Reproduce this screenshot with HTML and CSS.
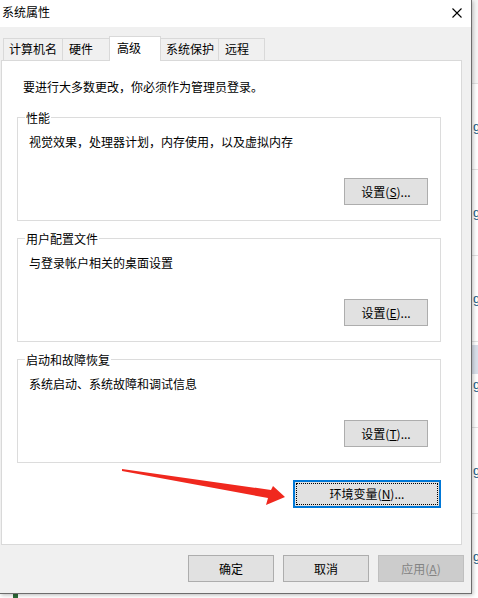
FILE: index.html
```html
<!DOCTYPE html>
<html lang="zh-CN">
<head>
<meta charset="utf-8">
<title>系统属性</title>
<link rel="stylesheet" href="styles.css">
</head>
<body>
<div class="screen">
  <div class="left">
    <div class="window">
      <div class="titlebar">
        <span class="title">系统属性</span>
        <svg class="close" width="10" height="10" viewBox="0 0 10 10"><path d="M0.5 0.5 L9.5 9.5 M9.5 0.5 L0.5 9.5" stroke="#000" stroke-width="1.1" fill="none"/></svg>
      </div>
      <div class="client">
        <div class="tabs">
          <div class="tab t1">计算机名</div>
          <div class="tab t2">硬件</div>
          <div class="tab t3 selected">高级</div>
          <div class="tab t4">系统保护</div>
          <div class="tab t5">远程</div>
        </div>
        <div class="panel">
          <p class="intro">要进行大多数更改，你必须作为管理员登录。</p>
          <div class="group first">
            <span class="legend">性能</span>
            <p class="desc">视觉效果，处理器计划，内存使用，以及虚拟内存</p>
            <button class="btn set">设置(<u>S</u>)...</button>
          </div>
          <div class="group">
            <span class="legend">用户配置文件</span>
            <p class="desc">与登录帐户相关的桌面设置</p>
            <button class="btn set">设置(<u>E</u>)...</button>
          </div>
          <div class="group">
            <span class="legend">启动和故障恢复</span>
            <p class="desc">系统启动、系统故障和调试信息</p>
            <button class="btn set">设置(<u>T</u>)...</button>
          </div>
          <button class="btn env"><span class="focus">环境变量(<u>N</u>)...</span></button>
        </div>
        <div class="actions">
          <button class="btn act">确定</button>
          <button class="btn act">取消</button>
          <button class="btn act disabled">应用(<u>A</u>)</button>
        </div>
      </div>
      <svg class="arrow" width="478" height="598" viewBox="0 0 478 598">
        <polygon points="122,469 271,490 273,486 285,497 266,505 268,498 122,471" fill="#f0281e"/>
      </svg>
    </div>
    <div class="below"><span class="green"></span></div>
  </div>
  <div class="strip">
    <div class="row"><span class="g">g</span></div>
    <div class="row"><span class="g">g</span></div>
    <div class="row"><span class="g">g</span></div>
    <div class="row band"><span class="g">g</span></div>
    <div class="row"><span class="g">g</span></div>
    <div class="row"><span class="g">g</span></div>
  </div>
</div>
</body>
</html>
```

FILE: styles.css
```css
html, body {
  margin: 0;
  padding: 0;
  background: #ffffff;
}
body {
  font-family: "Noto Sans CJK SC", "Microsoft YaHei", sans-serif;
  font-size: 12px;
  color: #000;
  width: 478px;
  height: 598px;
  overflow: hidden;
}
.screen {
  display: flex;
  width: 478px;
  height: 598px;
}
.left {
  display: flex;
  flex-direction: column;
  width: 472px;
  flex: none;
}
.window {
  position: relative;
  width: 471px;
  height: 593px;
  border-right: 1px solid #6d6d6d;
  border-bottom: 1px solid #6d6d6d;
  background: #f0f0f0;
  display: flex;
  flex-direction: column;
  box-shadow: 1px 1px 4px rgba(0, 0, 0, 0.28);
  z-index: 2;
}
.titlebar {
  height: 27px;
  background: #ffffff;
  display: flex;
  align-items: center;
  justify-content: space-between;
  padding: 0 9px 3px 2px;
  box-sizing: border-box;
  flex: none;
}
.title {
  line-height: 16px;
}
.close {
  display: block;
  margin-top: 1px;
}
.client {
  flex: 1;
  display: flex;
  flex-direction: column;
}
.tabs {
  display: flex;
  align-items: flex-end;
  height: 24px;
  margin: 9px 0 0 3px;
}
.tab {
  box-sizing: border-box;
  height: 22px;
  border: 1px solid #d9d9d9;
  border-bottom: none;
  background: #f0f0f0;
  line-height: 20px;
  padding-left: 5px;
  margin-left: -1px;
  white-space: nowrap;
}
.t1 { width: 60px; margin-left: 0; }
.t2 { width: 48px; padding-left: 6px; }
.t3 { width: 52px; }
.t4 { width: 59px; }
.t5 { width: 47px; padding-left: 6px; }
.tab.selected {
  position: relative;
  z-index: 1;
  height: 25px;
  margin-bottom: -1px;
  background: #ffffff;
  padding-left: 7px;
  line-height: 21px;
}
.panel {
  box-sizing: border-box;
  width: 461px;
  height: 485px;
  margin-left: 1px;
  border: 1px solid #d9d9d9;
  background: #ffffff;
  padding: 0 0 0 15px;
  display: flex;
  flex-direction: column;
  align-items: flex-start;
}
.intro {
  margin: 18px 0 0 6px;
  line-height: 16px;
}
.group {
  box-sizing: border-box;
  width: 424px;
  height: 104px;
  border: 1px solid #dcdcdc;
  margin-top: 17px;
  display: flex;
  flex-direction: column;
  align-items: flex-start;
}
.group.first {
  margin-top: 22px;
}
.legend {
  margin: -8px 0 0 7px;
  padding: 0 1px;
  background: #ffffff;
  line-height: 16px;
}
.desc {
  margin: 8px 0 0 11px;
  line-height: 16px;
}
.btn {
  font-family: inherit;
  font-size: 12px;
  color: #000;
  background: #e1e1e1;
  border: 1px solid #adadad;
  box-sizing: border-box;
  padding: 0;
  margin: 0;
  line-height: 16px;
  display: flex;
  align-items: center;
  justify-content: center;
}
.btn u {
  text-decoration: underline;
  text-underline-offset: 1px;
}
.set {
  width: 84px;
  height: 27px;
  align-self: flex-end;
  margin: 28px 12px 0 0;
}
.env {
  width: 148px;
  height: 28px;
  margin: 17px 0 0 276px;
  border: 2px solid #0078d7;
  padding: 1px;
}
.focus {
  box-sizing: border-box;
  width: 100%;
  height: 100%;
  border: 1px dotted #000;
  display: flex;
  align-items: center;
  justify-content: center;
}
.actions {
  display: flex;
  justify-content: flex-end;
  gap: 9px;
  margin: 10px 7px 0 0;
}
.act {
  width: 86px;
  height: 27px;
}
.act.disabled {
  background: #cccccc;
  border-color: #bfbfbf;
  color: #838383;
}
.arrow {
  position: absolute;
  left: 0;
  top: 0;
  pointer-events: none;
}
.below {
  height: 4px;
  background: #ffffff;
  position: relative;
}
.green {
  display: block;
  width: 5px;
  height: 4px;
  margin-left: 13px;
  background: #2d6a37;
}
.strip {
  flex: 1;
  background: #f5f5f5;
  padding-top: 83px;
  overflow: hidden;
  position: relative;
  z-index: 1;
}
.row {
  box-sizing: border-box;
  height: 86px;
  border-top: 1px solid #e2e2e2;
  background: #ffffff;
  padding-top: 35px;
}
.row.band {
  background: linear-gradient(#ffffff 0 3px, #d9dfea 3px 32px, #ffffff 32px);
}
.g {
  display: block;
  font-family: "Liberation Sans", Arial, sans-serif;
  font-size: 13px;
  line-height: 16px;
  color: #1a5b84;
  text-decoration: underline;
  margin-left: 1px;
}
```
